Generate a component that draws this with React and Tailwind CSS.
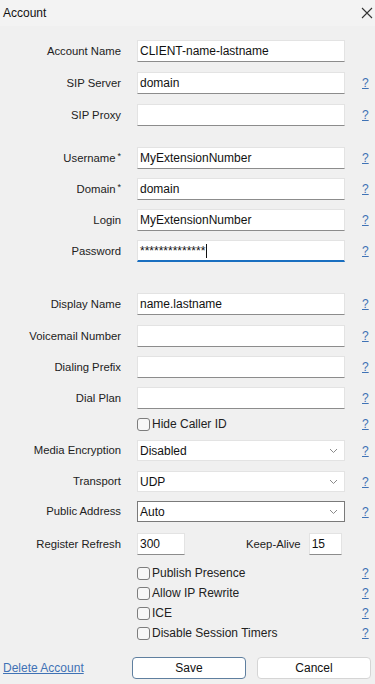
import React from "react";

const Help = () => (
  <span className="ml-[17px] text-[12px] text-[#3f72b5] underline leading-none">?</span>
);

const Label = ({ children }) => (
  <div className="w-[121px] shrink-0 text-right text-[11.3px] text-[#222] whitespace-nowrap">
    {children}
  </div>
);

const Req = () => <span className="text-[9px] align-top ml-[2px]">*</span>;

const Input = ({ value, focused }) => (
  <div
    className={`ml-[16px] w-[208px] h-[22px] bg-white border border-[#e3e3e3] flex items-center px-[2px] text-[12px] text-[#111] ${
      focused ? "border-b-2 border-b-[#1a6fc0]" : "border-b-[#8c8c8c]"
    }`}
  >
    {value}
    {focused && <span className="w-px h-[14px] bg-[#111] ml-[1px]" />}
  </div>
);

const Select = ({ value, dark }) => (
  <div
    className={`ml-[16px] w-[208px] h-[21px] bg-white border flex items-center justify-between pl-[2px] pr-[6px] text-[12px] text-[#111] ${
      dark ? "border-[#7a7a7a]" : "border-[#e3e3e3]"
    }`}
  >
    <span>{value}</span>
    <svg width="9" height="6" viewBox="0 0 9 6">
      <polyline points="1,1 4.5,4.5 8,1" fill="none" stroke="#8a8a8a" strokeWidth="1" />
    </svg>
  </div>
);

const Check = ({ label }) => (
  <div className="ml-[16px] w-[208px] flex items-center">
    <span className="w-[13px] h-[13px] rounded-[3px] border border-[#7d7d7d] bg-[#f7f7f7]" />
    <span className="ml-[2px] text-[12px] text-[#222]">{label}</span>
  </div>
);

const FieldRow = ({ label, value, help = true, focused, mt }) => (
  <div className={`flex items-center ${mt}`}>
    <Label>{label}</Label>
    <Input value={value} focused={focused} />
    {help && <Help />}
  </div>
);

const CheckRow = ({ label, mt }) => (
  <div className={`flex items-center h-[14px] ${mt}`}>
    <div className="w-[121px] shrink-0" />
    <Check label={label} />
    <Help />
  </div>
);

const SelectRow = ({ label, value, dark, mt }) => (
  <div className={`flex items-center ${mt}`}>
    <Label>{label}</Label>
    <Select value={value} dark={dark} />
    <Help />
  </div>
);

export default function App() {
  return (
    <div
      className="w-[375px] h-[684px] bg-[#f0f0f0] overflow-hidden"
      style={{ fontFamily: '"Liberation Sans", Arial, sans-serif' }}
    >
      {/* Title bar */}
      <div className="h-[26px] bg-[#f3f3f3] flex items-center justify-between pl-[3px] pr-[0px]">
        <span className="text-[12px] text-[#111]">Account</span>
        <svg width="16" height="16" viewBox="0 0 16 16">
          <path d="M3 3 L13 13 M13 3 L3 13" stroke="#333" strokeWidth="1.1" />
        </svg>
      </div>

      <div className="flex flex-col">
        <FieldRow label="Account Name" value="CLIENT-name-lastname" help={false} mt="mt-[14px]" />
        <FieldRow label="SIP Server" value="domain" mt="mt-[10px]" />
        <FieldRow label="SIP Proxy" value="" mt="mt-[10px]" />

        <FieldRow label={<>Username<Req /></>} value="MyExtensionNumber" mt="mt-[21px]" />
        <FieldRow label={<>Domain<Req /></>} value="domain" mt="mt-[9px]" />
        <FieldRow label="Login" value="MyExtensionNumber" mt="mt-[9px]" />
        <FieldRow label="Password" value="**************" focused mt="mt-[9px]" />

        <FieldRow label="Display Name" value="name.lastname" mt="mt-[31px]" />
        <FieldRow label="Voicemail Number" value="" mt="mt-[10px]" />
        <FieldRow label="Dialing Prefix" value="" mt="mt-[9px]" />
        <FieldRow label="Dial Plan" value="" mt="mt-[9px]" />
        <CheckRow label="Hide Caller ID" mt="mt-[8px]" />

        <SelectRow label="Media Encryption" value="Disabled" mt="mt-[9px]" />
        <SelectRow label="Transport" value="UDP" mt="mt-[10px]" />
        <SelectRow label="Public Address" value="Auto" dark mt="mt-[9px]" />

        <div className="flex items-center mt-[11px]">
          <Label>Register Refresh</Label>
          <div className="ml-[16px] w-[48px] h-[22px] bg-white border border-[#e3e3e3] border-b-[#8c8c8c] flex items-center px-[2px] text-[12px] text-[#111]">
            300
          </div>
          <span className="ml-[61px] text-[11.3px] text-[#222]">Keep-Alive</span>
          <div className="ml-[8px] w-[33px] h-[22px] bg-white border border-[#e3e3e3] border-b-[#8c8c8c] flex items-center px-[2px] text-[12px] text-[#111]">
            15
          </div>
        </div>

        <CheckRow label="Publish Presence" mt="mt-[11px]" />
        <CheckRow label="Allow IP Rewrite" mt="mt-[6px]" />
        <CheckRow label="ICE" mt="mt-[6px]" />
        <CheckRow label="Disable Session Timers" mt="mt-[6px]" />

        <div className="flex items-center mt-[17px]">
          <span className="ml-[3px] w-[129px] text-[12px] text-[#3f72b5] underline">
            Delete Account
          </span>
          <button className="w-[114px] h-[22px] bg-white border border-[#5f7f9f] rounded-[4px] text-[12px] text-[#111]">
            Save
          </button>
          <button className="ml-[11px] w-[114px] h-[22px] bg-white border border-[#d5d5d5] rounded-[4px] text-[12px] text-[#111]">
            Cancel
          </button>
        </div>
      </div>
    </div>
  );
}
